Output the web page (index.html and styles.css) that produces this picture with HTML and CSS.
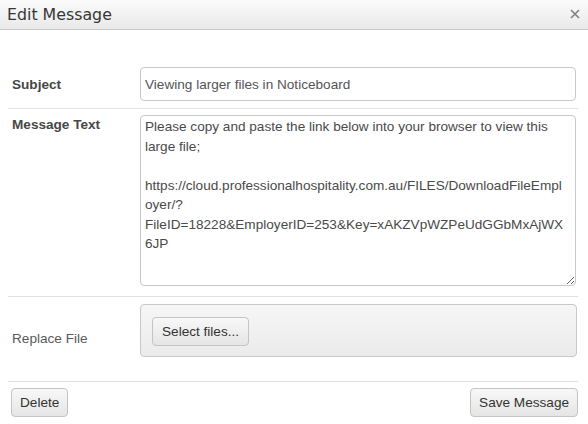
FILE: index.html
```html
<!DOCTYPE html>
<html>
<head>
<meta charset="utf-8">
<link rel="stylesheet" href="styles.css">
</head>
<body>
<div class="dialog">
  <div class="titlebar">
    <span class="title">Edit Message</span>
    <span class="close" aria-label="Close">
      <svg width="10" height="10" viewBox="0 0 10 10"><path d="M1 1L9 9M9 1L1 9" stroke="#808080" stroke-width="1.6" fill="none"/></svg>
    </span>
  </div>
  <div class="content">
    <div class="row row-subject">
      <label class="label bold">Subject</label>
      <div class="field">
        <input class="input" type="text" value="Viewing larger files in Noticeboard">
      </div>
    </div>
    <div class="row row-text">
      <label class="label bold">Message Text</label>
      <div class="field">
        <textarea class="textarea">Please copy and paste the link below into your browser to view this large file;

https://cloud.professionalhospitality.com.au/FILES/DownloadFileEmployer/?FileID=18228&amp;EmployerID=253&amp;Key=xAKZVpWZPeUdGGbMxAjWX6JP</textarea>
      </div>
    </div>
    <div class="row row-file">
      <label class="label plain">Replace File</label>
      <div class="field">
        <div class="filebox">
          <button class="btn btn-select" type="button">Select files...</button>
        </div>
      </div>
    </div>
    <div class="footer">
      <button class="btn" type="button">Delete</button>
      <button class="btn" type="button">Save Message</button>
    </div>
  </div>
</div>
</body>
</html>
```
FILE: styles.css
```css
html, body {
  margin: 0;
  padding: 0;
  background: #ffffff;
}
body {
  font-family: "Liberation Sans", Arial, sans-serif;
  font-size: 13.6px;
  color: #444;
}
.dialog {
  width: 588px;
}
.titlebar {
  height: 29px;
  display: flex;
  align-items: center;
  justify-content: space-between;
  padding: 0 8px 0 7px;
  background: linear-gradient(#fbfbfb, #e9e9e9);
  border-bottom: 1px solid #c9c9c9;
}
.title {
  font-family: "DejaVu Sans", Verdana, sans-serif;
  font-size: 15.8px;
  color: #363636;
  line-height: 29px;
}
.close {
  display: flex;
  width: 10px;
  height: 10px;
  margin-top: -2px;
}
.content {
  padding: 30px 10px 0 8px;
}
.row {
  display: flex;
  padding: 7px 2px 7px 4px;
  border-bottom: 1px solid #e2e2e2;
}
.row-subject {
  align-items: center;
}
.row-text {
  padding-top: 6px;
  padding-bottom: 10px;
}
.row-file {
  align-items: center;
  padding-bottom: 24px;
}
.label {
  width: 128px;
  flex: none;
  line-height: 19px;
}
.row-file .label {
  align-self: center;
  margin-bottom: -15px;
}
.bold {
  font-weight: bold;
  color: #474747;
}
.plain {
  color: #5a5a5a;
}
.field {
  flex: 1;
}
.input {
  box-sizing: border-box;
  width: 436px;
  height: 34px;
  padding: 0 4px;
  border: 1px solid #c8c8c8;
  border-radius: 4px;
  font-family: "Liberation Sans", Arial, sans-serif;
  font-size: 13.6px;
  color: #555;
  background: #fff;
  outline: none;
}
.textarea {
  display: block;
  box-sizing: border-box;
  width: 436px;
  height: 171px;
  margin: 0;
  padding: 1px 8px 1px 4px;
  border: 1px solid #c8c8c8;
  border-radius: 4px;
  font-family: "Liberation Sans", Arial, sans-serif;
  font-size: 13.6px;
  line-height: 19.5px;
  color: #4a4a4a;
  background: #fff;
  outline: none;
}
.filebox {
  box-sizing: border-box;
  width: 437px;
  height: 53px;
  padding: 12px 0 0 11px;
  border: 1px solid #c8c8c8;
  border-radius: 4px;
  background: linear-gradient(#f6f6f6, #ebebeb);
}
.btn {
  box-sizing: border-box;
  height: 29px;
  padding: 0 8px;
  border: 1px solid #c4c4c4;
  border-radius: 4px;
  background: linear-gradient(#f8f8f8, #e5e5e5);
  font-family: "Liberation Sans", Arial, sans-serif;
  font-size: 13.6px;
  color: #333;
}
.btn-select {
  padding: 0 9px;
}
.footer {
  display: flex;
  justify-content: space-between;
  padding: 6px 0 0 3px;
}
```
